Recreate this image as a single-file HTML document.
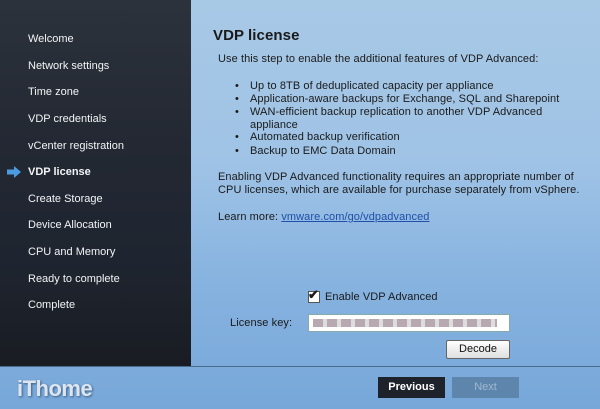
<!DOCTYPE html>
<html><head><meta charset="utf-8"><style>
*{margin:0;padding:0;box-sizing:border-box}
body{width:600px;height:409px;overflow:hidden;position:relative;font-family:"Liberation Sans",Arial,sans-serif;background:linear-gradient(#a8c9e6 0%,#9fc3e6 40%,#86b2df 70%,#77a7d9 100%)}
.side{position:absolute;left:0;top:0;width:191px;height:367px;background:linear-gradient(#2c323b,#232833 40%,#1f2530 70%,#191c22)}
.side div{position:absolute;left:28px;color:#f2f4f6;font-size:11px;line-height:13px}
.t{position:absolute;color:#1a1a1a;font-size:11px;line-height:13px;white-space:nowrap;letter-spacing:0.08px}
.btn{position:absolute;font-size:11px;text-align:center;line-height:21px}
</style></head><body>
<div class="side">
<div style="top:33px">Welcome</div>
<div style="top:60px">Network settings</div>
<div style="top:86px">Time zone</div>
<div style="top:113px">VDP credentials</div>
<div style="top:140px">vCenter registration</div>
<div style="top:166px;font-weight:bold">VDP license</div>
<div style="top:193px">Create Storage</div>
<div style="top:219px">Device Allocation</div>
<div style="top:246px">CPU and Memory</div>
<div style="top:273px">Ready to complete</div>
<div style="top:299px">Complete</div>
<svg style="position:absolute;left:7px;top:166px" width="14" height="12" viewBox="0 0 14 12"><path d="M0 3.5H7V0L14 6L7 12V8.5H0Z" fill="#4a9be0"/></svg>
</div>
<div style="position:absolute;left:17px;top:376px;font-size:22px;font-weight:bold;color:#dde6ef;text-shadow:1px 1px 2px #3d5f86;letter-spacing:-0.5px">iThome</div>
<div class="t" style="left:213px;top:27px;font-size:15px;font-weight:bold;line-height:18px">VDP license</div>
<div class="t" style="left:218px;top:53px">Use this step to enable the additional features of VDP Advanced:</div>
<div class="t" style="left:235px;top:80px">•</div><div class="t" style="left:250px;top:80px">Up to 8TB of deduplicated capacity per appliance</div>
<div class="t" style="left:235px;top:93px">•</div><div class="t" style="left:250px;top:93px">Application-aware backups for Exchange, SQL and Sharepoint</div>
<div class="t" style="left:235px;top:106px">•</div><div class="t" style="left:250px;top:106px">WAN-efficient backup replication to another VDP Advanced</div>
<div class="t" style="left:250px;top:119px">appliance</div>
<div class="t" style="left:235px;top:131px">•</div><div class="t" style="left:250px;top:131px">Automated backup verification</div>
<div class="t" style="left:235px;top:145px">•</div><div class="t" style="left:250px;top:145px">Backup to EMC Data Domain</div>
<div class="t" style="left:218px;top:171px">Enabling VDP Advanced functionality requires an appropriate number of</div>
<div class="t" style="left:218px;top:184px">CPU licenses, which are available for purchase separately from vSphere.</div>
<div class="t" style="left:218px;top:211px">Learn more: <span style="color:#1f4fa8;text-decoration:underline">vmware.com/go/vdpadvanced</span></div>
<div style="position:absolute;left:308px;top:291px;width:12px;height:12px;background:#fff;border:1px solid #555"></div>
<div class="t" style="left:308px;top:288px;font-size:13px;font-weight:bold">✔</div>
<div class="t" style="left:325px;top:291px">Enable VDP Advanced</div>
<div class="t" style="left:230px;top:317px">License key:</div>
<div style="position:absolute;left:308px;top:314px;width:202px;height:18px;background:#fff;border:1px solid #8aa"></div>
<div style="position:absolute;left:313px;top:319px;width:184px;height:8px;background:repeating-linear-gradient(90deg,#b8a8b0 0 10px,#ddd 10px 14px)"></div>
<div class="btn" style="left:446px;top:340px;width:64px;height:19px;line-height:17px;background:linear-gradient(#fff,#dedede);border:1px solid #666;border-radius:2px;color:#111">Decode</div>
<div style="position:absolute;left:0;top:366px;width:600px;height:1px;background:#4a6a8a"></div>
<div class="btn" style="left:378px;top:377px;width:67px;height:21px;background:#1e232b;color:#fff;font-weight:bold">Previous</div>
<div class="btn" style="left:452px;top:377px;width:67px;height:21px;background:#5e86ad;color:#9fb8d0">Next</div>
</body></html>
